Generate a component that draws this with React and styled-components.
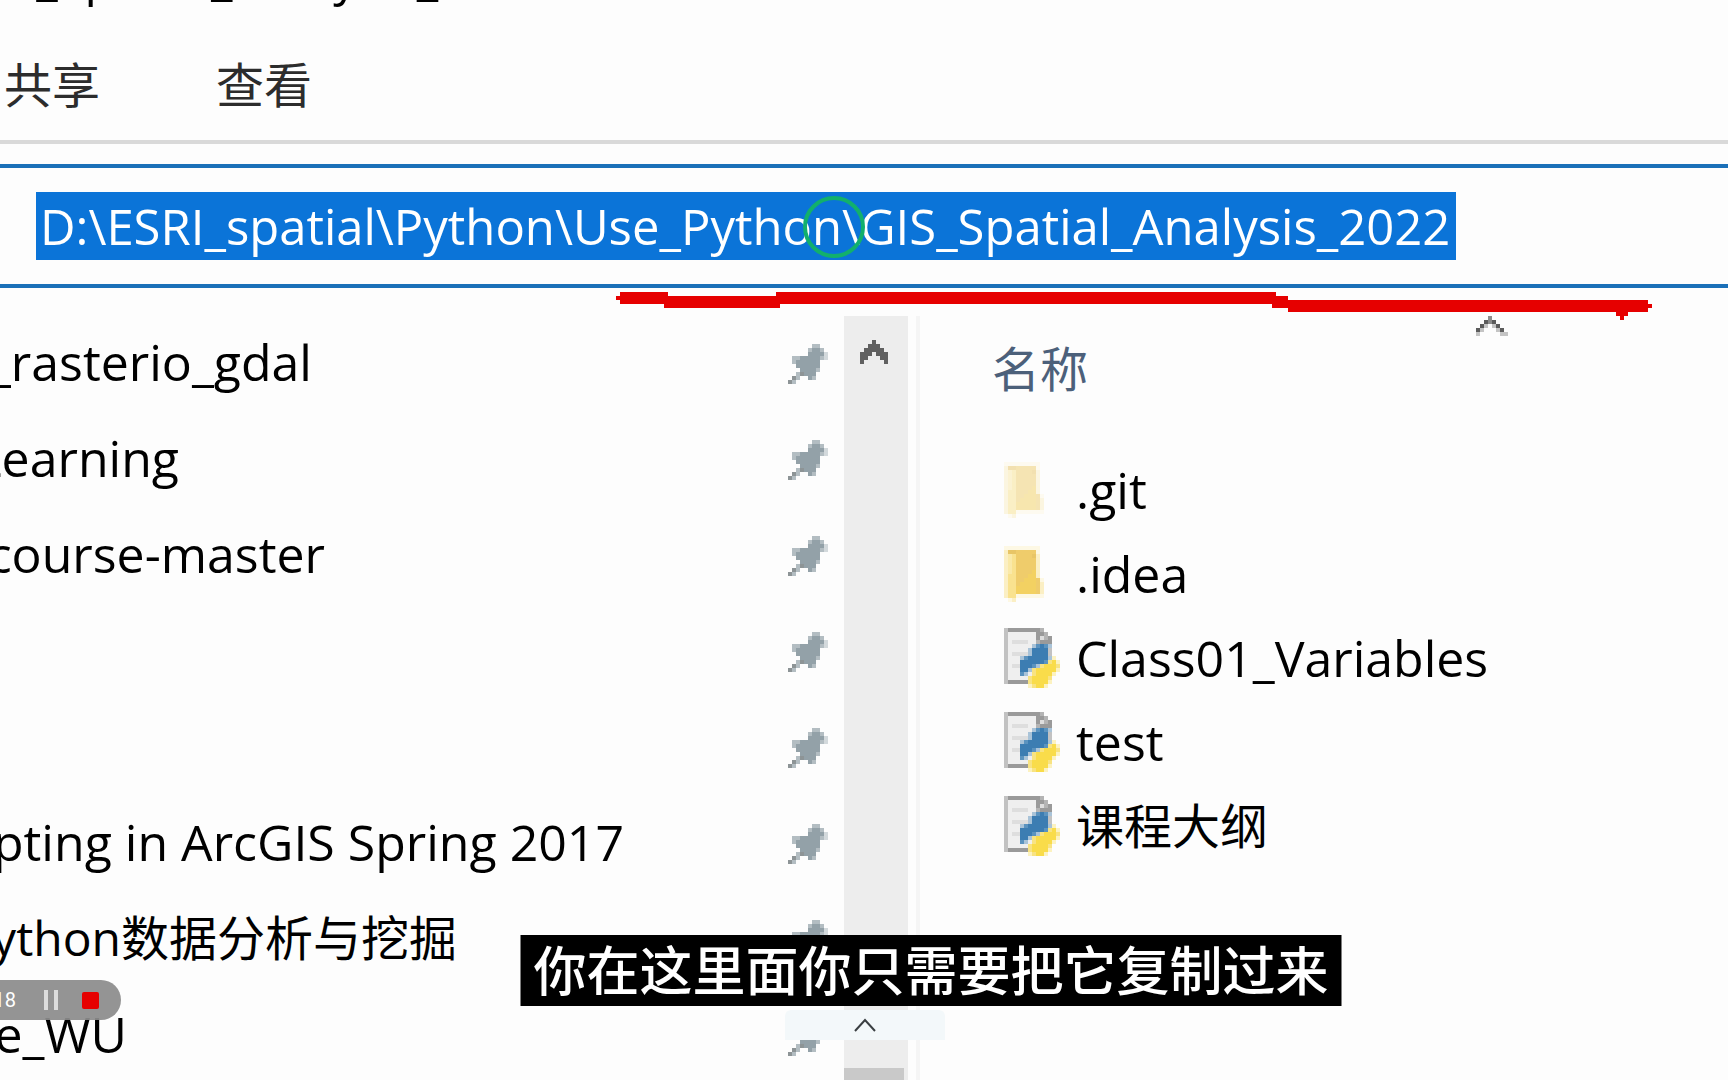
import React from "react";
import styled, { createGlobalStyle } from "styled-components";

const CELL = 4;

const GlobalStyle = createGlobalStyle`
  * {
    box-sizing: border-box;
  }

  body {
    margin: 0;
    overflow: hidden;
    background: #fdfdfd;
  }

  button,
  input {
    margin: 0;
    padding: 0;
    border: 0;
    background: none;
    color: inherit;
    font: inherit;
  }
`;

const Window = styled.div`
  position: relative;
  display: flex;
  flex-direction: column;
  height: 100vh;
  overflow: hidden;
  color: #000;
  font-family: "Open Sans", "Noto Sans CJK SC", sans-serif;
  font-size: 49px;
  line-height: 68px;
`;

const TitleBar = styled.header`
  display: flex;
  align-items: flex-end;
  height: 10px;
  white-space: nowrap;
`;

const Title = styled.span`
  margin-left: -860px;
`;

const Ribbon = styled.nav`
  display: flex;
  gap: 116px;
  height: 134px;
  padding: 38px 4px 0;
  border-bottom: 4px solid #d9d9d9;
  color: #2c2c2c;
  font-family: "Noto Sans CJK SC", sans-serif;
  font-size: 48px;
`;

const RibbonTab = styled.button`
  height: 68px;
`;

const AddressBar = styled.div`
  display: flex;
  align-items: center;
  height: 124px;
  margin: 20px 0 28px;
  padding-left: 36px;
  border: solid #1b70b8;
  border-width: 4px 0;
`;

const PathInput = styled.input`
  field-sizing: content;
  height: 68px;
  padding: 0 6px 0 4px;
  background: #0b74d8;
  color: #fff;
  outline: none;
`;

const Body = styled.div`
  display: flex;
  flex: 1;
  min-height: 0;
`;

const QuickAccess = styled.ul`
  flex: 0 0 844px;
  margin: 0;
  padding: 0;
  list-style: none;
  overflow: hidden;
`;

const QuickItem = styled.li`
  display: flex;
  align-items: center;
  justify-content: space-between;
  height: 96px;
  padding-right: 16px;
`;

const QuickLink = styled.a`
  display: flex;
  justify-content: flex-end;
  width: ${p => p.$visible}px;
  padding-bottom: 4px;
  overflow: hidden;
  color: inherit;
  font-size: ${p => (p.$cjk ? 48 : 50)}px;
  text-decoration: none;
  white-space: nowrap;
`;

const IconButton = styled.button`
  display: flex;
`;

const Scrollbar = styled.div`
  display: flex;
  flex-direction: column;
  justify-content: space-between;
  width: 64px;
  background: #ededed;
`;

const ScrollUp = styled(IconButton)`
  justify-content: center;
  padding: 24px 4px 0 0;
`;

const ScrollThumb = styled.div`
  width: 60px;
  height: 12px;
  background: #c9c9c9;
`;

const Files = styled.main`
  flex: 1;
  min-width: 0;
  margin-left: 8px;
  padding-left: 72px;
  border-left: 4px solid #f5f5f5;
  overflow: hidden;
`;

const FileTable = styled.table`
  width: 1000px;
  border-collapse: collapse;

  th,
  td {
    padding: 0;
    text-align: left;
    font-weight: normal;
  }
`;

const ColumnHeader = styled.th`
  position: relative;
  height: 132px;
  vertical-align: top;
`;

const SortButton = styled.button`
  height: 68px;
  margin-top: 16px;
  color: #4c607a;
  font-family: "Noto Sans CJK SC", sans-serif;
  font-size: 48px;
`;

const SortMark = styled.span`
  position: absolute;
  top: 0;
  left: 50%;
  display: flex;
  transform: translateX(-50%);
`;

const FileCell = styled.div`
  display: flex;
  align-items: center;
  height: 84px;
  padding-left: 12px;
`;

const FileIcon = styled.span`
  display: flex;
  width: 72px;
  opacity: ${p => (p.$hidden ? 0.5 : 1)};
`;

const FileName = styled.span`
  font-size: ${p => (p.$cjk ? 48 : 50)}px;
`;

const ClickRing = styled.div`
  position: absolute;
  top: 196px;
  left: 803px;
  width: 62px;
  height: 62px;
  border: 4px solid #12b06c;
  border-radius: 50%;
`;

const PenStroke = styled.svg`
  position: absolute;
  top: 292px;
  left: 616px;
  fill: #e60000;
`;

const Recorder = styled.div`
  position: absolute;
  top: 980px;
  left: 0;
  display: flex;
  align-items: center;
  justify-content: flex-end;
  width: 121px;
  height: 40px;
  padding-right: 22px;
  border-radius: 0 20px 20px 0;
  background: rgba(140, 140, 140, 0.93);
  color: #fff;
  font-family: Roboto, sans-serif;
  font-size: 20px;
  line-height: 40px;
  overflow: hidden;
`;

const PauseButton = styled.button`
  flex-shrink: 0;
  width: 14px;
  height: 20px;
  margin: 0 24px 0 28px;
  border: solid #dcdcdc;
  border-width: 0 4px;
`;

const StopButton = styled.button`
  flex-shrink: 0;
  width: 17px;
  height: 17px;
  border-radius: 2px;
  background: #e60000;
`;

const Subtitle = styled.p`
  position: absolute;
  bottom: 74px;
  left: 931px;
  margin: 0;
  padding: 0 13px 4px;
  transform: translateX(-50%);
  background: #000;
  color: #fff;
  font-family: "Noto Sans CJK SC", sans-serif;
  font-size: 53px;
  font-weight: 500;
  line-height: 67px;
  white-space: nowrap;
`;

const PullTab = styled.button`
  position: absolute;
  bottom: 40px;
  left: 785px;
  display: flex;
  align-items: center;
  justify-content: center;
  width: 160px;
  height: 30px;
  border-radius: 6px 6px 0 0;
  background: #f3f8fa;
`;

const PIN = {
  colors: { a: "#d3d9dc", b: "#b3bdc2", c: "#93a1a8", d: "#8d9496" },
  rows: [
    "......bb..",
    ".....bccb.",
    ".....cccca",
    ".bbcccccba",
    ".bcccccc..",
    "..cccccc..",
    "...ccccb..",
    "..bdccc...",
    ".db..cb...",
    "db........"
  ]
};

const SCROLL_ARROW = {
  colors: { x: "#606060" },
  rows: ["...x...", "..xxx..", ".xxxxx.", "xxx.xxx", "xx...xx", "x.....x"]
};

const SORT_ARROW = {
  colors: { a: "#c4c4c4", m: "#8c8c8c", d: "#5c5c5c" },
  rows: ["...m....", "..dmd...", ".da.ad..", "da...ad.", "a.....aa"]
};

const FOLDER = {
  colors: { p: "#fdf8e4", q: "#fbefc4", e: "#e8c566", y: "#f9e28f", z: "#fae9a8", f: "#efcc6b", g: "#f3d162" },
  rows: [
    "ppppppppp.",
    "qeefffffp.",
    "qzyffffeq.",
    "qzyfffffq.",
    "qzyfffffq.",
    "qzyfffffq.",
    "qzyffffgq.",
    "qyyfffggq.",
    "qyyffgggfp",
    "qyyfggggfq",
    "qyygggggfq",
    "qyygggggfq",
    "qyyppppppp",
    ".pq......."
  ]
};

const PYTHON_FILE = {
  colors: {
    g: "#c2c2c2",
    d: "#9a9a9a",
    m: "#b4b4b4",
    w: "#efefef",
    l: "#dedede",
    s: "#a9c3d8",
    b: "#5b93bf",
    B: "#3c7db2",
    y: "#f8e382",
    Y: "#f9dc4a",
    p: "#fcf2c0"
  },
  rows: [
    "gddddddddm....",
    "gwwwwwwwddm...",
    "gwwwwwwwdlmd..",
    "gwllllwwmddd..",
    "gwwwwwwsbBbs..",
    "gwwwwwsBBBBg..",
    "gwllllsBBBBg..",
    "gwwwsbBBBBBsp.",
    "gwwwBBBBBBbyYp",
    "gwllBBBbsyYYYy",
    "gwwwBBsyYYYYYp",
    "gwwwbswyYYYYp.",
    "gwwwwwyYYYYy..",
    "gdddddyYYYYp..",
    "......pyYYp..."
  ]
};

const PixelIcon = ({ icon }) => {
  const width = icon.rows[0].length * CELL;
  const height = icon.rows.length * CELL;
  return (
    <svg width={width} height={height} shapeRendering="crispEdges" aria-hidden="true">
      {icon.rows.map((row, y) =>
        [...row].map(
          (key, x) =>
            key !== "." && (
              <rect
                key={`${x}-${y}`}
                x={x * CELL}
                y={y * CELL}
                width={CELL}
                height={CELL}
                fill={icon.colors[key]}
              />
            )
        )
      )}
    </svg>
  );
};

// visible: how much of the name still shows right of the window edge
const quickItems = [
  { name: "_rasterio_gdal", visible: 312 },
  { name: "Learning", visible: 179 },
  { name: "course-master", visible: 325 },
  { name: "", visible: 0 },
  { name: "", visible: 0 },
  { name: "pting in ArcGIS Spring 2017", visible: 624 },
  { name: "ython数据分析与挖掘", visible: 457, cjk: true },
  { name: "e_WU", visible: 127 }
];

const files = [
  { name: ".git", icon: FOLDER, hidden: true },
  { name: ".idea", icon: FOLDER },
  { name: "Class01_Variables", icon: PYTHON_FILE },
  { name: "test", icon: PYTHON_FILE },
  { name: "课程大纲", icon: PYTHON_FILE, cjk: true }
];

const App = () => (
  <>
    <GlobalStyle />
    <Window>
      <TitleBar>
        <Title>D:\ESRI_spatial\Python\Use_Python\GIS_Spatial_Analysis_2022</Title>
      </TitleBar>
      <Ribbon>
        <RibbonTab>共享</RibbonTab>
        <RibbonTab>查看</RibbonTab>
      </Ribbon>
      <AddressBar>
        <PathInput
          aria-label="Path"
          spellCheck={false}
          defaultValue="D:\ESRI_spatial\Python\Use_Python\GIS_Spatial_Analysis_2022"
        />
      </AddressBar>
      <Body>
        <QuickAccess>
          {quickItems.map((item, i) => (
            <QuickItem key={i}>
              <QuickLink href="#" $visible={item.visible} $cjk={item.cjk}>
                {item.name}
              </QuickLink>
              <IconButton aria-label="Unpin">
                <PixelIcon icon={PIN} />
              </IconButton>
            </QuickItem>
          ))}
        </QuickAccess>
        <Scrollbar>
          <ScrollUp aria-label="Scroll up">
            <PixelIcon icon={SCROLL_ARROW} />
          </ScrollUp>
          <ScrollThumb />
        </Scrollbar>
        <Files>
          <FileTable>
            <thead>
              <tr>
                <ColumnHeader>
                  <SortButton>名称</SortButton>
                  <SortMark>
                    <PixelIcon icon={SORT_ARROW} />
                  </SortMark>
                </ColumnHeader>
              </tr>
            </thead>
            <tbody>
              {files.map(file => (
                <tr key={file.name}>
                  <td>
                    <FileCell>
                      <FileIcon $hidden={file.hidden}>
                        <PixelIcon icon={file.icon} />
                      </FileIcon>
                      <FileName $cjk={file.cjk}>{file.name}</FileName>
                    </FileCell>
                  </td>
                </tr>
              ))}
            </tbody>
          </FileTable>
        </Files>
      </Body>
      <ClickRing />
      <PenStroke width="1036" height="28" shapeRendering="crispEdges" aria-hidden="true">
        <path d="M4 0H52V4H160V0H660V4H672V8H1032V12H1036V16H1032V20H1012V24H1008V28H1004V24H1000V20H672V16H656V12H164V16H48V12H4V8H0V4H4Z" />
      </PenStroke>
      <Recorder>
        <span>18</span>
        <PauseButton aria-label="Pause" />
        <StopButton aria-label="Stop" />
      </Recorder>
      <Subtitle>你在这里面你只需要把它复制过来</Subtitle>
      <PullTab aria-label="Expand">
        <svg width="22" height="14" fill="none" stroke="#3a3f42" strokeWidth="2" aria-hidden="true">
          <path d="M1 13L11 2L21 13" />
        </svg>
      </PullTab>
    </Window>
  </>
);

export default App;
